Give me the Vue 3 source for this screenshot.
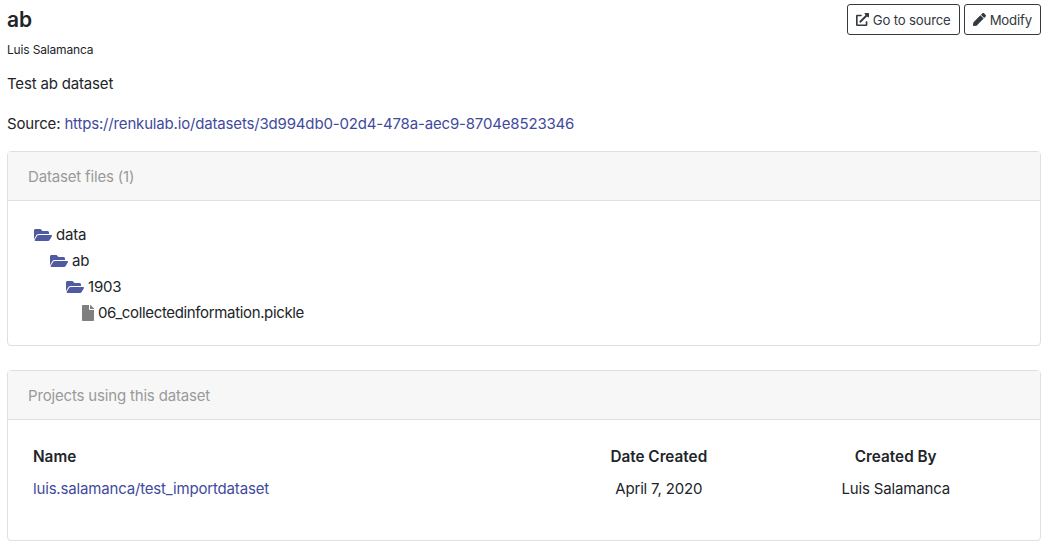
<script setup>
const tree = [
  { name: 'data', depth: 0, folder: true },
  { name: 'ab', depth: 1, folder: true },
  { name: '1903', depth: 2, folder: true },
  { name: '06_collectedinformation.pickle', depth: 3, folder: false },
]
const indent = (d) => ({ paddingLeft: d * 16 + 'px' })
</script>

<template>
  <div class="page">
    <header class="head">
      <div>
        <h1 class="title">ab</h1>
        <div class="author">Luis Salamanca</div>
      </div>
      <div class="actions">
        <a class="btn">
          <svg class="ico" viewBox="0 0 512 512"><path d="M432,320H400a16,16,0,0,0-16,16V448H64V128H208a16,16,0,0,0,16-16V80a16,16,0,0,0-16-16H48A48,48,0,0,0,0,112V464a48,48,0,0,0,48,48H400a48,48,0,0,0,48-48V336A16,16,0,0,0,432,320ZM488,0h-128c-21.37,0-32.05,25.91-17,41l35.73,35.73L135,320.37a24,24,0,0,0,0,34L157.67,377a24,24,0,0,0,34,0L435.28,133.32,471,169c15,15,41,4.5,41-17V24A24,24,0,0,0,488,0Z"/></svg>
          Go to source
        </a>
        <a class="btn">
          <svg class="ico" viewBox="0 0 512 512"><path d="M290.74 93.24l128.02 128.02-277.99 277.99-114.14 12.6C11.35 513.54-1.56 500.62.14 485.34l12.7-114.22 277.9-278.88zm207.2-19.06l-60.11-60.11c-18.75-18.75-49.16-18.75-67.91 0l-56.55 56.55 128.02 128.02 56.55-56.55c18.75-18.76 18.75-49.16 0-67.91z"/></svg>
          Modify
        </a>
      </div>
    </header>

    <p class="desc">Test ab dataset</p>
    <p class="source">Source: <a class="link">https://renkulab.io/datasets/3d994db0-02d4-478a-aec9-8704e8523346</a></p>

    <section class="card files">
      <div class="card-head">Dataset files (1)</div>
      <div class="card-body tree">
        <div v-for="n in tree" :key="n.name" class="node" :style="indent(n.depth)">
          <svg v-if="n.folder" class="folder" viewBox="0 0 576 512"><path d="M572.694 292.093L500.27 416.248A63.997 63.997 0 0 1 444.989 448H45.025c-18.523 0-30.064-20.093-20.731-36.093l72.424-124.155A64 64 0 0 1 152 256h399.964c18.523 0 30.064 20.093 20.73 36.093zM152 224h328v-48c0-26.51-21.49-48-48-48H272l-64-64H48C21.49 64 0 85.49 0 112v278.046l69.077-118.418C86.214 242.25 117.989 224 152 224z"/></svg>
          <svg v-else class="file" viewBox="0 0 384 512"><path d="M224 136V0H24C10.7 0 0 10.7 0 24v464c0 13.3 10.7 24 24 24h336c13.3 0 24-10.7 24-24V160H248c-13.2 0-24-10.8-24-24zm160-14.1v6.1H256V0h6.1c6.4 0 12.5 2.5 17 7l97.9 98c4.5 4.5 7 10.6 7 16.9z"/></svg>
          <span :class="{ fname: !n.folder }">{{ n.name }}</span>
        </div>
      </div>
    </section>

    <section class="card">
      <div class="card-head">Projects using this dataset</div>
      <div class="card-body projects">
        <table class="table">
          <thead>
            <tr>
              <th class="c1">Name</th>
              <th class="c2">Date Created</th>
              <th class="c3">Created By</th>
            </tr>
          </thead>
          <tbody>
            <tr>
              <td class="c1"><a class="link">luis.salamanca/test_importdataset</a></td>
              <td class="c2">April 7, 2020</td>
              <td class="c3">Luis Salamanca</td>
            </tr>
          </tbody>
        </table>
      </div>
    </section>
  </div>
</template>

<style scoped>
.page {
  width: 1052px;
  box-sizing: border-box;
  padding: 4px 11px 0 7px;
  font-family: Inter, "Noto Sans", sans-serif;
  font-size: 15px;
  letter-spacing: -0.17px;
  line-height: 22px;
  color: #212529;
}
.head {
  display: flex;
  justify-content: space-between;
  align-items: flex-start;
  height: 57px;
}
.title {
  margin: 0;
  font-size: 21px;
  font-weight: 600;
  line-height: 31px;
  letter-spacing: 0;
}
.author {
  font-size: 12px;
  line-height: 18px;
  margin-top: 6px;
}
.actions {
  display: flex;
  gap: 4px;
}
.btn {
  display: flex;
  align-items: center;
  gap: 4px;
  height: 31px;
  box-sizing: border-box;
  padding: 0 8px;
  border: 1px solid #343a40;
  border-radius: 3px;
  font-size: 13.2px;
  color: #343a40;
}
.ico {
  width: 13px;
  height: 13px;
  fill: #343a40;
}
.desc {
  margin: 12px 0 18px;
}
.source {
  margin: 0 0 16px;
}
.link {
  color: #3f4a9e;
}
.card {
  border: 1px solid #dfdfdf;
  border-radius: 4px;
}
.files {
  margin-bottom: 24px;
}
.card-head {
  height: 49px;
  box-sizing: border-box;
  padding: 1px 20px 0;
  display: flex;
  align-items: center;
  background: #f7f7f7;
  border-bottom: 1px solid #dfdfdf;
  color: #9a9a9a;
}
.card-body {
  padding: 20px;
}
.tree {
  padding: 21px 26px;
  height: 144px;
  box-sizing: border-box;
}
.node {
  display: flex;
  align-items: center;
  gap: 4px;
  height: 26px;
}
.fname {
  letter-spacing: -0.35px;
}
.folder {
  width: 18px;
  height: 16px;
  fill: #4f5aa3;
}
.file {
  width: 12px;
  height: 16px;
  fill: #7f7f7f;
}
.projects {
  height: 120px;
  box-sizing: border-box;
}
.table {
  width: 100%;
  table-layout: fixed;
  border-collapse: collapse;
}
.table th,
.table td {
  padding: 5px;
  line-height: 22px;
}
.table th {
  font-size: 15.3px;
  font-weight: 600;
  letter-spacing: 0;
  padding: 6px 5px 5px;
}
.c1 {
  width: 52.8%;
  text-align: left;
}
.c2 {
  width: 22.4%;
  text-align: center;
}
.c3 {
  width: 24.8%;
  text-align: center;
}
</style>
